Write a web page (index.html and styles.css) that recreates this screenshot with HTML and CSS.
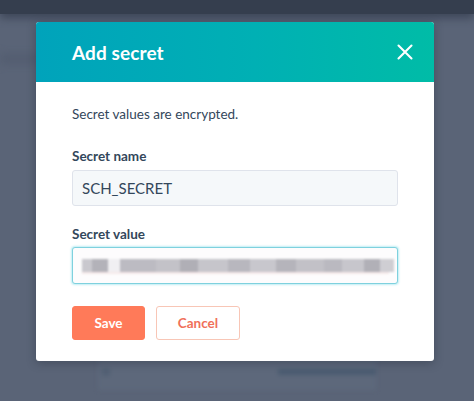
FILE: index.html
```html
<!DOCTYPE html>
<html>
<head>
<meta charset="utf-8">
<link rel="stylesheet" href="styles.css">
</head>
<body>
<div class="page">
  <div class="topbar"></div>
  <div class="smear"></div>
  <div class="under-panel">
    <div class="under-icon"></div>
    <div class="under-link"></div>
  </div>
</div>
<div class="modal">
  <div class="modal-header">
    <h1 class="modal-title">Add secret</h1>
    <svg class="close" width="16" height="16" viewBox="0 0 16 16"><path d="M1.5 1.5 L14.5 14.5 M14.5 1.5 L1.5 14.5" stroke="#fff" stroke-width="2.1" stroke-linecap="round" fill="none"/></svg>
  </div>
  <div class="modal-body">
    <p class="intro">Secret values are encrypted.</p>
    <label class="label first">Secret name</label>
    <div class="input name">SCH_SECRET</div>
    <label class="label second">Secret value</label>
    <div class="input value">
      <div class="pixels">
        <span class="px" style="width:10px;background:#c9c8ce"></span>
        <span class="px" style="width:16px;background:#b3b2b9"></span>
        <span class="px" style="width:12px;background:#f0eff2"></span>
        <span class="px" style="width:36px;background:#bcbbc2"></span>
        <span class="px" style="width:24px;background:#c3c2c8"></span>
        <span class="px" style="width:18px;background:#b0afb6"></span>
        <span class="px" style="width:30px;background:#c6c5cb"></span>
        <span class="px" style="width:22px;background:#b8b7be"></span>
        <span class="px" style="width:26px;background:#c8c7cd"></span>
        <span class="px" style="width:20px;background:#b5b4bb"></span>
        <span class="px" style="width:28px;background:#c2c1c7"></span>
        <span class="px" style="width:18px;background:#bab9c0"></span>
        <span class="px" style="width:22px;background:#c7c6cc"></span>
        <span class="px" style="width:16px;background:#b1b0b7"></span>
        <span class="px" style="width:14px;background:#cfced3"></span>
      </div>
    </div>
    <div class="actions">
      <button class="btn save">Save</button>
      <button class="btn cancel">Cancel</button>
    </div>
  </div>
</div>
</body>
</html>
```

FILE: styles.css
```css
html, body {
  margin: 0;
  padding: 0;
}
body {
  width: 474px;
  height: 401px;
  overflow: hidden;
  background: #5a6477;
  font-family: Lato, "Noto Sans", sans-serif;
  position: relative;
}
.page {
  width: 474px;
  height: 401px;
  display: flex;
  flex-direction: column;
}
.topbar {
  height: 14px;
  background: #353e4e;
  box-shadow: 0 4px 8px #3d4658;
  flex: none;
}
.smear {
  margin: 40px 0 0 0;
  width: 40px;
  height: 10px;
  background: #535d70;
  filter: blur(4px);
}
.under-panel {
  margin: 290px 0 0 98px;
  width: 278px;
  height: 36px;
  background: #5d687b;
  filter: blur(2px);
  position: relative;
  display: flex;
  align-items: center;
  justify-content: space-between;
  padding: 0 0 0 4px;
  box-sizing: border-box;
}
.under-icon {
  width: 8px;
  height: 8px;
  background: #526074;
}
.under-link {
  width: 98px;
  height: 6px;
  background: #4a5b70;
}
.modal {
  position: absolute;
  left: 36px;
  top: 22px;
  width: 398px;
  background: #fff;
  border-radius: 3px;
  box-shadow: 0 2px 10px rgba(30, 36, 50, 0.35);
  overflow: hidden;
}
.modal-header {
  height: 60px;
  background: linear-gradient(90deg, #00a3bb 0%, #00b0b4 55%, #00bca7 100%);
  display: flex;
  align-items: center;
  justify-content: space-between;
  padding: 0 21px 0 36px;
}
.modal-title {
  margin: 0;
  color: #fff;
  font-size: 19px;
  font-weight: 700;
  letter-spacing: 0.1px;
}
.close {
  display: block;
}
.modal-body {
  padding: 24px 36px 21px 36px;
  display: flex;
  flex-direction: column;
  color: #33475b;
}
.intro {
  margin: 0;
  font-size: 13.5px;
  line-height: 16px;
}
.label {
  font-size: 13.5px;
  font-weight: 700;
  line-height: 16px;
}
.label.first {
  margin-top: 26px;
}
.label.second {
  margin-top: 20px;
}
.input {
  box-sizing: border-box;
  width: 326px;
  border-radius: 3px;
  margin-top: 6px;
}
.input.name {
  height: 36px;
  background: #f5f8fa;
  border: 1px solid #dfe3eb;
  font-size: 15px;
  line-height: 34px;
  padding-left: 9px;
  color: #33475b;
}
.input.value {
  height: 37px;
  margin-top: 5px;
  background: #fdfcfd;
  border: 1px solid #7fd1de;
  box-shadow: 0 0 2px 1px rgba(0, 189, 210, 0.25);
  padding: 0 8px 0 9px;
  display: flex;
  align-items: center;
}
.pixels {
  display: flex;
  height: 13px;
  width: 100%;
  filter: blur(1px);
  box-shadow: 0 2px 0 #f7e9ea;
}
.px {
  display: block;
  height: 13px;
  flex: none;
}
.actions {
  display: flex;
  gap: 11px;
  margin-top: 22px;
}
.btn {
  height: 34px;
  border-radius: 3px;
  font-family: Lato, "Noto Sans", sans-serif;
  font-size: 13.5px;
  font-weight: 700;
  padding: 0;
  cursor: pointer;
}
.save {
  width: 73px;
  background: #ff7a59;
  border: 1px solid #ff7a59;
  color: #fff;
}
.cancel {
  width: 84px;
  background: #fff;
  border: 1px solid #f8c6b6;
  color: #f0705a;
}
```
